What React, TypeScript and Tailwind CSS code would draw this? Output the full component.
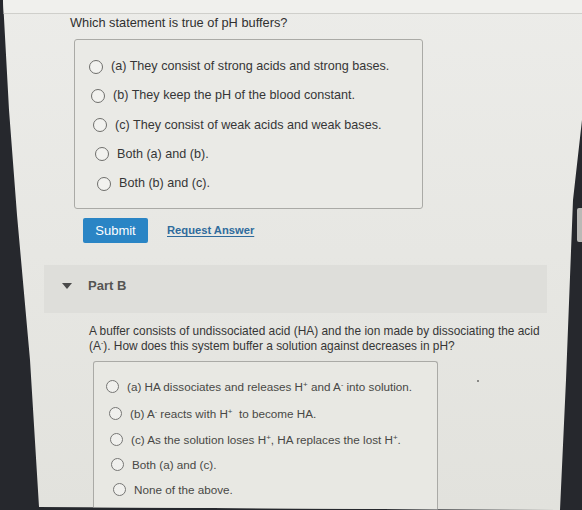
import React from "react";

const font = "font-['Liberation_Sans',Arial,sans-serif]";

function Radio({ size = 14 }: { size?: number }) {
  return (
    <span
      className={
        size === 14
          ? "inline-block w-[14px] h-[14px] shrink-0 rounded-full border-[1.5px] border-[#6e6e6c] bg-[#f2f2ef]"
          : "inline-block w-[13px] h-[13px] shrink-0 rounded-full border-[1.5px] border-[#767674] bg-[#f0f0ed]"
      }
    />
  );
}

const opts1: { ml: string; text: string }[] = [
  { ml: "ml-[14px]", text: "(a) They consist of strong acids and strong bases." },
  { ml: "ml-[16px]", text: "(b) They keep the pH of the blood constant." },
  { ml: "ml-[18px]", text: "(c) They consist of weak acids and weak bases." },
  { ml: "ml-[20px]", text: "Both (a) and (b)." },
  { ml: "ml-[22px]", text: "Both (b) and (c)." },
];

export default function App() {
  return (
    <div className={`relative w-[582px] h-[510px] overflow-hidden bg-[#26282d] ${font}`}>
      <div className="h-full w-full flex flex-col bg-gradient-to-b from-[#ecece9] via-[#e7e7e3] to-[#e2e2dd] [clip-path:polygon(3px_0,582px_0,582px_120px,573px_200px,566px_380px,560px_510px,39px_507px,30px_360px,17px_215px,9px_110px)]">
        {/* top strip */}
        <div className="h-[14px] shrink-0 bg-[#f0f0ed] border-b border-[#cfcfcb]" />

        {/* Question A */}
        <p className="mt-[1px] pl-[70px] text-[12.8px] leading-[16px] text-[#303030]">
          Which statement is true of pH buffers?
        </p>

        {/* Box 1 */}
        <div className="mt-[8px] ml-[74px] w-[349px] h-[170px] shrink-0 rounded-[3px] border border-[#aaaaa6] bg-[#eaeae6] pt-[12px]">
          {opts1.map((o) => (
            <div key={o.text} className={`h-[29.25px] flex items-center gap-[8px] ${o.ml}`}>
              <Radio />
              <span className="text-[12.6px] text-[#363636] whitespace-nowrap">{o.text}</span>
            </div>
          ))}
        </div>

        {/* Buttons */}
        <div className="mt-[9px] ml-[83px] flex items-center shrink-0">
          <button className="w-[65px] h-[25px] rounded-[2px] bg-[#2a85c5] text-white text-[13px] flex items-center justify-center">
            Submit
          </button>
          <span className="ml-[19px] text-[11.2px] font-bold text-[#2f6b9c] underline underline-offset-[2px] leading-none">
            Request Answer
          </span>
        </div>

        {/* Part B band */}
        <div className="mt-[22px] ml-[44px] w-[503px] h-[48px] shrink-0 bg-[#dededa] flex items-center pb-[7px]">
          <svg width="10" height="6" viewBox="0 0 10 6" className="ml-[18px]">
            <polygon points="0,0 10,0 5,6" fill="#4a4a4a" />
          </svg>
          <span className="ml-[16px] text-[13px] font-bold text-[#555553]">Part B</span>
        </div>

        {/* Paragraph */}
        <div className="mt-[11px] pl-[89px] text-[11.9px] leading-[15px] text-[#363636] whitespace-nowrap">
          <p>A buffer consists of undissociated acid (HA) and the ion made by dissociating the acid</p>
          <p>
            (A<sup className="text-[7px] -top-[5px]">-</sup>). How does this system buffer a solution against decreases in pH?
          </p>
        </div>

        {/* Box 2 */}
        <div className="mt-[7px] ml-[93px] w-[345px] flex-1 rounded-t-[3px] border border-b-0 border-[#aaaaa6] bg-[#e8e8e3] pt-[11px] text-[11.7px] text-[#484846]">
          <div className="h-[27px] flex items-center gap-[8px] ml-[12px]">
            <Radio size={13} />
            <span className="whitespace-nowrap">
              (a) HA dissociates and releases H<sup className="text-[8px]">+</sup> and A
              <sup className="text-[7px]">-</sup> into solution.
            </span>
          </div>
          <div className="h-[27px] flex items-center gap-[8px] ml-[15px]">
            <Radio size={13} />
            <span className="whitespace-nowrap">
              (b) A<sup className="text-[7px]">-</sup> reacts with H<sup className="text-[8px]">+</sup>
              {"\u00a0 "}to become HA.
            </span>
          </div>
          <div className="h-[25px] flex items-center gap-[8px] ml-[16px]">
            <Radio size={13} />
            <span className="whitespace-nowrap">
              (c) As the solution loses H<sup className="text-[8px]">+</sup>, HA replaces the lost H
              <sup className="text-[8px]">+</sup>.
            </span>
          </div>
          <div className="h-[25px] flex items-center gap-[8px] ml-[17px]">
            <Radio size={13} />
            <span className="whitespace-nowrap">Both (a) and (c).</span>
          </div>
          <div className="h-[25px] flex items-center gap-[8px] ml-[19px]">
            <Radio size={13} />
            <span className="whitespace-nowrap">None of the above.</span>
          </div>
        </div>
      </div>

      {/* scrollbar thumb on bezel edge */}
      <div className="absolute right-0 top-[208px] w-[5px] h-[34px] rounded-l-[2px] bg-[#b9b9b6]" />
      {/* speck on screen */}
      <div className="absolute left-[477px] top-[380px] w-[2px] h-[2px] rounded-full bg-[#6a6a68]" />
    </div>
  );
}
